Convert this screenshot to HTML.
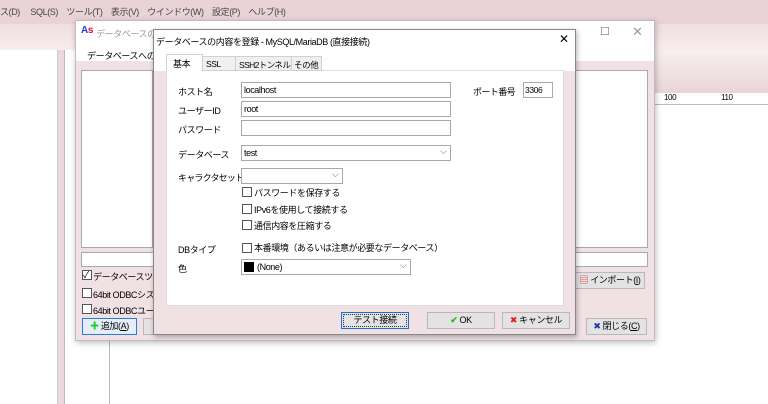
<!DOCTYPE html>
<html><head><meta charset="utf-8"><style>
*{box-sizing:border-box;margin:0;padding:0}
body{width:768px;height:404px;overflow:hidden;background:#fff;position:relative;font-family:"Liberation Sans","Noto Sans CJK JP",sans-serif;font-size:9px;letter-spacing:-0.4px;color:#000;white-space:nowrap}
.a{position:absolute}
.box{position:absolute;background:#fff;border:1px solid #a9a9a9}
.btn{position:absolute;background:#e3e3e3;border:1px solid #b8b8b8;text-align:center;line-height:15px;font-size:9px;white-space:nowrap;overflow:hidden}
.cb{position:absolute;width:10px;height:10px;border:1px solid #555;background:#fff}
.lbl{position:absolute;font-size:9px}
</style></head><body>
<div class="a" style="left:0;top:0;width:768px;height:24px;background:#e9d3d6"></div>
<div class="a" style="left:0;top:24px;width:768px;height:70px;background:linear-gradient(#efdfe1,#f7eeef 40%,#e9d4d7)"></div>
<div class="a" style="left:0;top:5px;font-size:9px;color:#444">ス(D)&nbsp;&nbsp;&nbsp;&nbsp;&nbsp;SQL(S)&nbsp;&nbsp;&nbsp;&nbsp;ツール(T)&nbsp;&nbsp;&nbsp;&nbsp;表示(V)&nbsp;&nbsp;&nbsp;&nbsp;ウインドウ(W)&nbsp;&nbsp;&nbsp;&nbsp;設定(P)&nbsp;&nbsp;&nbsp;&nbsp;ヘルプ(H)</div>
<div class="a" style="left:0;top:50px;width:58px;height:354px;background:#fff;border-right:1px solid #ccc"></div>
<div class="a" style="left:58px;top:50px;width:6px;height:354px;background:#ead8da"></div>
<div class="a" style="left:64px;top:50px;width:46px;height:354px;background:#fff;border-left:1px solid #bbb;border-right:1px solid #bbb"></div>
<div class="a" style="left:654px;top:93px;width:114px;height:12px;background:#fff;border-bottom:1px solid #bbb"></div>
<div class="a" style="left:664px;top:93px;font-size:8px">100</div>
<div class="a" style="left:721px;top:93px;font-size:8px">110</div>
<div class="a" style="left:75px;top:20px;width:580px;height:321px;background:#f0e2e4;border:1px solid #c9b8ba;box-shadow:1px 2px 6px rgba(0,0,0,.25)"></div>
<div class="a" style="left:76px;top:21px;width:578px;height:40px;background:#fff"></div>
<div class="a" style="left:81px;top:25px;color:#2a3fd0;font-weight:bold;font-size:10px">A<span style="color:#e04">s</span></div>
<div class="a" style="left:96px;top:27px;color:#999">データベースの追加と削除</div>
<div class="a" style="left:600px;top:25px;color:#777;font-size:11px">☐</div>
<div class="a" style="left:632px;top:24px;color:#999;font-size:13px">✕</div>
<div class="a" style="left:87px;top:49px">データベースへの接</div>
<div class="box" style="left:81px;top:70px;width:72px;height:178px"></div>
<div class="box" style="left:575px;top:70px;width:73px;height:178px"></div>
<div class="box" style="left:81px;top:252px;width:567px;height:15px"></div>
<div class="cb" style="left:82px;top:270px"></div><div class="lbl" style="left:83px;top:268px;font-size:9px">✓</div>
<div class="lbl" style="left:93px;top:270px">データベースツリー</div>
<div class="cb" style="left:82px;top:288px"></div><div class="lbl" style="left:93px;top:288px">64bit ODBCシステ</div>
<div class="cb" style="left:82px;top:304px"></div><div class="lbl" style="left:93px;top:304px">64bit ODBCユーザ</div>
<div class="btn" style="left:82px;top:318px;width:55px;height:17px;border:1px solid #2a7bd8;background:#e5eef8"><span style="color:#2c2;font-weight:bold">✚</span> 追加(<u>A</u>)</div>
<div class="btn" style="left:143px;top:318px;width:12px;height:17px"></div>
<div class="btn" style="left:575px;top:272px;width:70px;height:17px"><span style="color:#d33">▤</span> インポート(<u>I</u>)</div>
<div class="btn" style="left:586px;top:318px;width:61px;height:17px"><span style="color:#23b">✖</span> 閉じる(<u>C</u>)</div>
<div class="a" style="left:153px;top:29px;width:423px;height:306px;background:#f0e2e4;border:1px solid #888;box-shadow:1px 2px 5px rgba(0,0,0,.3)"></div>
<div class="a" style="left:154px;top:30px;width:421px;height:21px;background:#fff"></div>
<div class="a" style="left:156px;top:35px">データベースの内容を登録 - MySQL/MariaDB (直接接続)</div>
<div class="a" style="left:559px;top:32px;font-size:12px">✕</div>
<div class="a" style="left:154px;top:51px;width:421px;height:20px;background:#fff"></div>
<div class="a" style="left:166px;top:70px;width:398px;height:236px;background:#fff;border:1px solid #ddd"></div>
<div class="a" style="left:202px;top:56px;width:120px;height:15px;background:#f0f0f0;border:1px solid #d0d0d0"></div>
<div class="a" style="left:235px;top:56px;width:1px;height:15px;background:#d0d0d0"></div>
<div class="a" style="left:291px;top:56px;width:1px;height:15px;background:#d0d0d0"></div>
<div class="a" style="left:166px;top:54px;width:37px;height:18px;background:#fff;border:1px solid #d0d0d0;border-bottom:none"></div>
<div class="lbl" style="left:173px;top:57px">基本</div>
<div class="lbl" style="left:206px;top:59px;font-size:8.5px">SSL</div>
<div class="lbl" style="left:239px;top:59px;font-size:8.5px;letter-spacing:-0.6px">SSH2トンネル</div>
<div class="lbl" style="left:294px;top:59px;font-size:8.5px">その他</div>
<div class="lbl" style="left:178px;top:85px">ホスト名</div>
<div class="box" style="left:241px;top:82px;width:210px;height:16px"></div><div class="lbl" style="left:244px;top:85px">localhost</div>
<div class="lbl" style="left:178px;top:104px">ユーザーID</div>
<div class="box" style="left:241px;top:101px;width:210px;height:16px"></div><div class="lbl" style="left:244px;top:104px">root</div>
<div class="lbl" style="left:178px;top:123px">パスワード</div>
<div class="box" style="left:241px;top:120px;width:210px;height:16px"></div>
<div class="lbl" style="left:473px;top:85px;letter-spacing:-0.6px">ポート番号</div>
<div class="box" style="left:523px;top:82px;width:30px;height:16px"></div><div class="lbl" style="left:525px;top:85px;font-size:8.5px">3306</div>
<div class="lbl" style="left:178px;top:148px">データベース</div>
<div class="box" style="left:241px;top:145px;width:210px;height:16px"></div><div class="lbl" style="left:244px;top:148px">test</div><div class="lbl" style="left:440px;top:146px;color:#666">⌵</div>
<div class="lbl" style="left:178px;top:171px;letter-spacing:-0.8px">キャラクタセット</div>
<div class="box" style="left:241px;top:168px;width:102px;height:16px"></div><div class="lbl" style="left:332px;top:169px;color:#666">⌵</div>
<div class="cb" style="left:242px;top:187px"></div><div class="lbl" style="left:254px;top:186px">パスワードを保存する</div>
<div class="cb" style="left:242px;top:204px"></div><div class="lbl" style="left:254px;top:203px">IPv6を使用して接続する</div>
<div class="cb" style="left:242px;top:220px"></div><div class="lbl" style="left:254px;top:219px">通信内容を圧縮する</div>
<div class="lbl" style="left:178px;top:243px">DBタイプ</div>
<div class="cb" style="left:242px;top:243px"></div><div class="lbl" style="left:254px;top:241px">本番環境（あるいは注意が必要なデータベース）</div>
<div class="lbl" style="left:178px;top:262px">色</div>
<div class="box" style="left:241px;top:259px;width:170px;height:16px"></div>
<div class="a" style="left:244px;top:262px;width:10px;height:10px;background:#000"></div>
<div class="lbl" style="left:257px;top:262px">(None)</div><div class="lbl" style="left:400px;top:260px;color:#666">⌵</div>
<div class="btn" style="left:341px;top:312px;width:68px;height:17px;border:1px solid #1a6ed8;outline:1px dotted #333;outline-offset:-3px">テスト接続</div>
<div class="btn" style="left:427px;top:312px;width:68px;height:17px"><span style="color:#2b2;font-weight:bold">✔</span> OK</div>
<div class="btn" style="left:502px;top:312px;width:68px;height:17px"><span style="color:#d22">✖</span> キャンセル</div>
</body></html>
